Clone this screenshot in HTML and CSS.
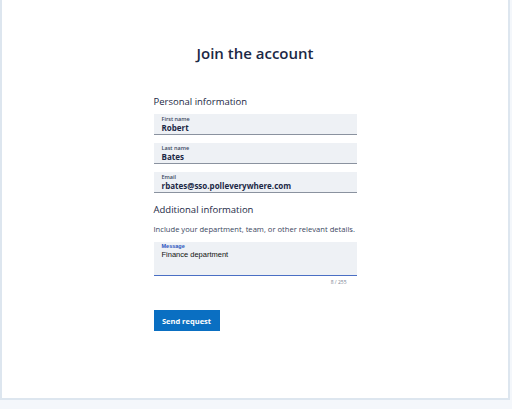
FILE: index.html
```html
<!DOCTYPE html>
<html lang="en">
<head>
  <meta charset="UTF-8">
  <meta name="viewport" content="width=device-width, initial-scale=1.0">
  <title>Join the account</title>
  <link rel="stylesheet" href="styles.css">
</head>
<body>
  <div class="card">
    <h1>Join the account</h1>
    <form class="join-form">
      <h2>Personal information</h2>
      <div class="field">
        <label>First name</label>
        <div class="value">Robert</div>
      </div>
      <div class="field">
        <label>Last name</label>
        <div class="value">Bates</div>
      </div>
      <div class="field">
        <label>Email</label>
        <div class="value">rbates@sso.polleverywhere.com</div>
      </div>
      <h2 class="extra">Additional information</h2>
      <p class="hint">Include your department, team, or other relevant details.</p>
      <div class="field message">
        <label>Message</label>
        <div class="value">Finance department</div>
      </div>
      <div class="counter">8 / 255</div>
      <button type="button" class="send">Send request</button>
    </form>
  </div>
</body>
</html>
```

FILE: styles.css
```css
body {
  margin: 0;
  padding: 0;
  font-family: "Open Sans", "Noto Sans", sans-serif;
  background-color: #f4f7fb;
  color: #1b2845;
}

.card {
  width: 510px;
  height: 400px;
  box-sizing: border-box;
  background-color: white;
  border: 2px solid #dde6ef;
  border-top: none;
  padding-top: 43px;
}

h1 {
  margin: 0 0 32px;
  text-align: center;
  font-size: 15px;
  font-weight: 600;
  color: #1b2845;
}

.join-form {
  width: 203px;
  margin: 0 auto;
  display: flex;
  flex-direction: column;
}

h2 {
  margin: 0 0 6px;
  font-size: 9.5px;
  font-weight: 500;
}

h2.extra {
  margin-top: 2px;
}

.field {
  background-color: #eef1f5;
  border-bottom: 1px solid #8a929f;
  height: 20px;
  box-sizing: content-box;
  padding: 0 8px;
  margin-bottom: 8px;
  display: flex;
  flex-direction: column;
  justify-content: center;
}

.field label {
  font-size: 5.5px;
  line-height: 7px;
  font-weight: 600;
  color: #3a4660;
}

.field .value {
  font-size: 8px;
  line-height: 10px;
  font-weight: 700;
  color: #1b2845;
}

.hint {
  margin: 2px 0 8px;
  font-size: 7.6px;
  white-space: nowrap;
  color: #3a4660;
}

.field.message {
  height: 32px;
  justify-content: flex-start;
  padding-top: 1px;
  border-bottom: 1px solid #4a6fc4;
  margin-bottom: 3px;
}

.field.message label {
  color: #2a55c0;
  font-family: "Liberation Sans", Arial, sans-serif;
  font-weight: 700;
}

.field.message .value {
  font-family: "Liberation Sans", Arial, sans-serif;
  font-weight: 400;
  font-size: 7.5px;
  color: #111;
}

.counter {
  align-self: flex-end;
  margin-right: 10px;
  font-size: 5px;
  color: #7d8594;
}

.send {
  align-self: flex-start;
  margin-top: 25px;
  width: 66px;
  height: 21px;
  padding: 0;
  border: none;
  background-color: #0a6fc2;
  color: white;
  font-family: "Open Sans", sans-serif;
  font-size: 7.5px;
  font-weight: 700;
}
```
